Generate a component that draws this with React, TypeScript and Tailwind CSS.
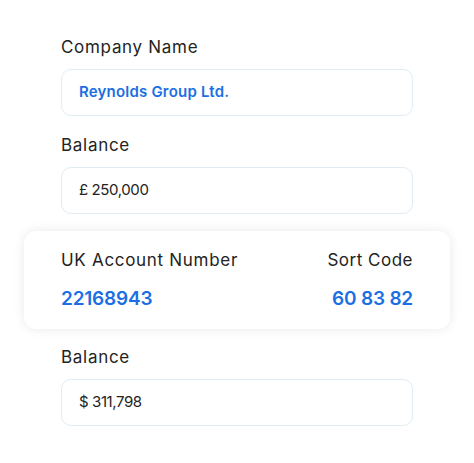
import React from "react";

const font = { fontFamily: "Inter, 'Noto Sans', sans-serif" };

function Field({ label, value, accent }: { label: string; value: string; accent?: boolean }) {
  return (
    <div className="flex flex-col gap-[10px] px-[61px]">
      <p className="text-[17px] leading-[24px] tracking-[0.7px] text-[#232323]">{label}</p>
      <div className="h-[47px] rounded-[10px] border border-[#e0edf4] bg-white px-[17px] flex items-center">
        <span
          className={
            accent
              ? "text-[15px] font-semibold tracking-[0.2px] text-[#1b6fe2]"
              : "text-[15px] tracking-[-0.4px] text-[#232323]"
          }
        >
          {value}
        </span>
      </div>
    </div>
  );
}

export default function App() {
  return (
    <div style={font} className="w-[474px] h-[463px] bg-white pt-[35px] flex flex-col">
      <Field label="Company Name" value="Reynolds Group Ltd." accent />
      <div className="mt-[17px]">
        <Field label="Balance" value="£ 250,000" />
      </div>

      {/* account details card */}
      <div className="mt-[17px] mx-[24px] h-[98px] rounded-[12px] bg-white shadow-[0_0_12px_rgba(0,0,0,0.09)] px-[37px] py-[17px] flex justify-between">
        <div className="flex flex-col gap-[14px]">
          <p className="text-[17px] leading-[24px] tracking-[0.7px] text-[#232323]">UK Account Number</p>
          <p className="text-[19px] leading-[26px] font-semibold tracking-[-0.2px] text-[#1b6fe2]">22168943</p>
        </div>
        <div className="flex flex-col gap-[14px] items-end">
          <p className="text-[17px] leading-[24px] tracking-[0.5px] text-[#232323]">Sort Code</p>
          <p className="text-[19px] leading-[26px] font-semibold tracking-[-0.2px] text-[#1b6fe2]">60 83 82</p>
        </div>
      </div>

      <div className="mt-[16px]">
        <Field label="Balance" value="$ 311,798" />
      </div>
    </div>
  );
}
